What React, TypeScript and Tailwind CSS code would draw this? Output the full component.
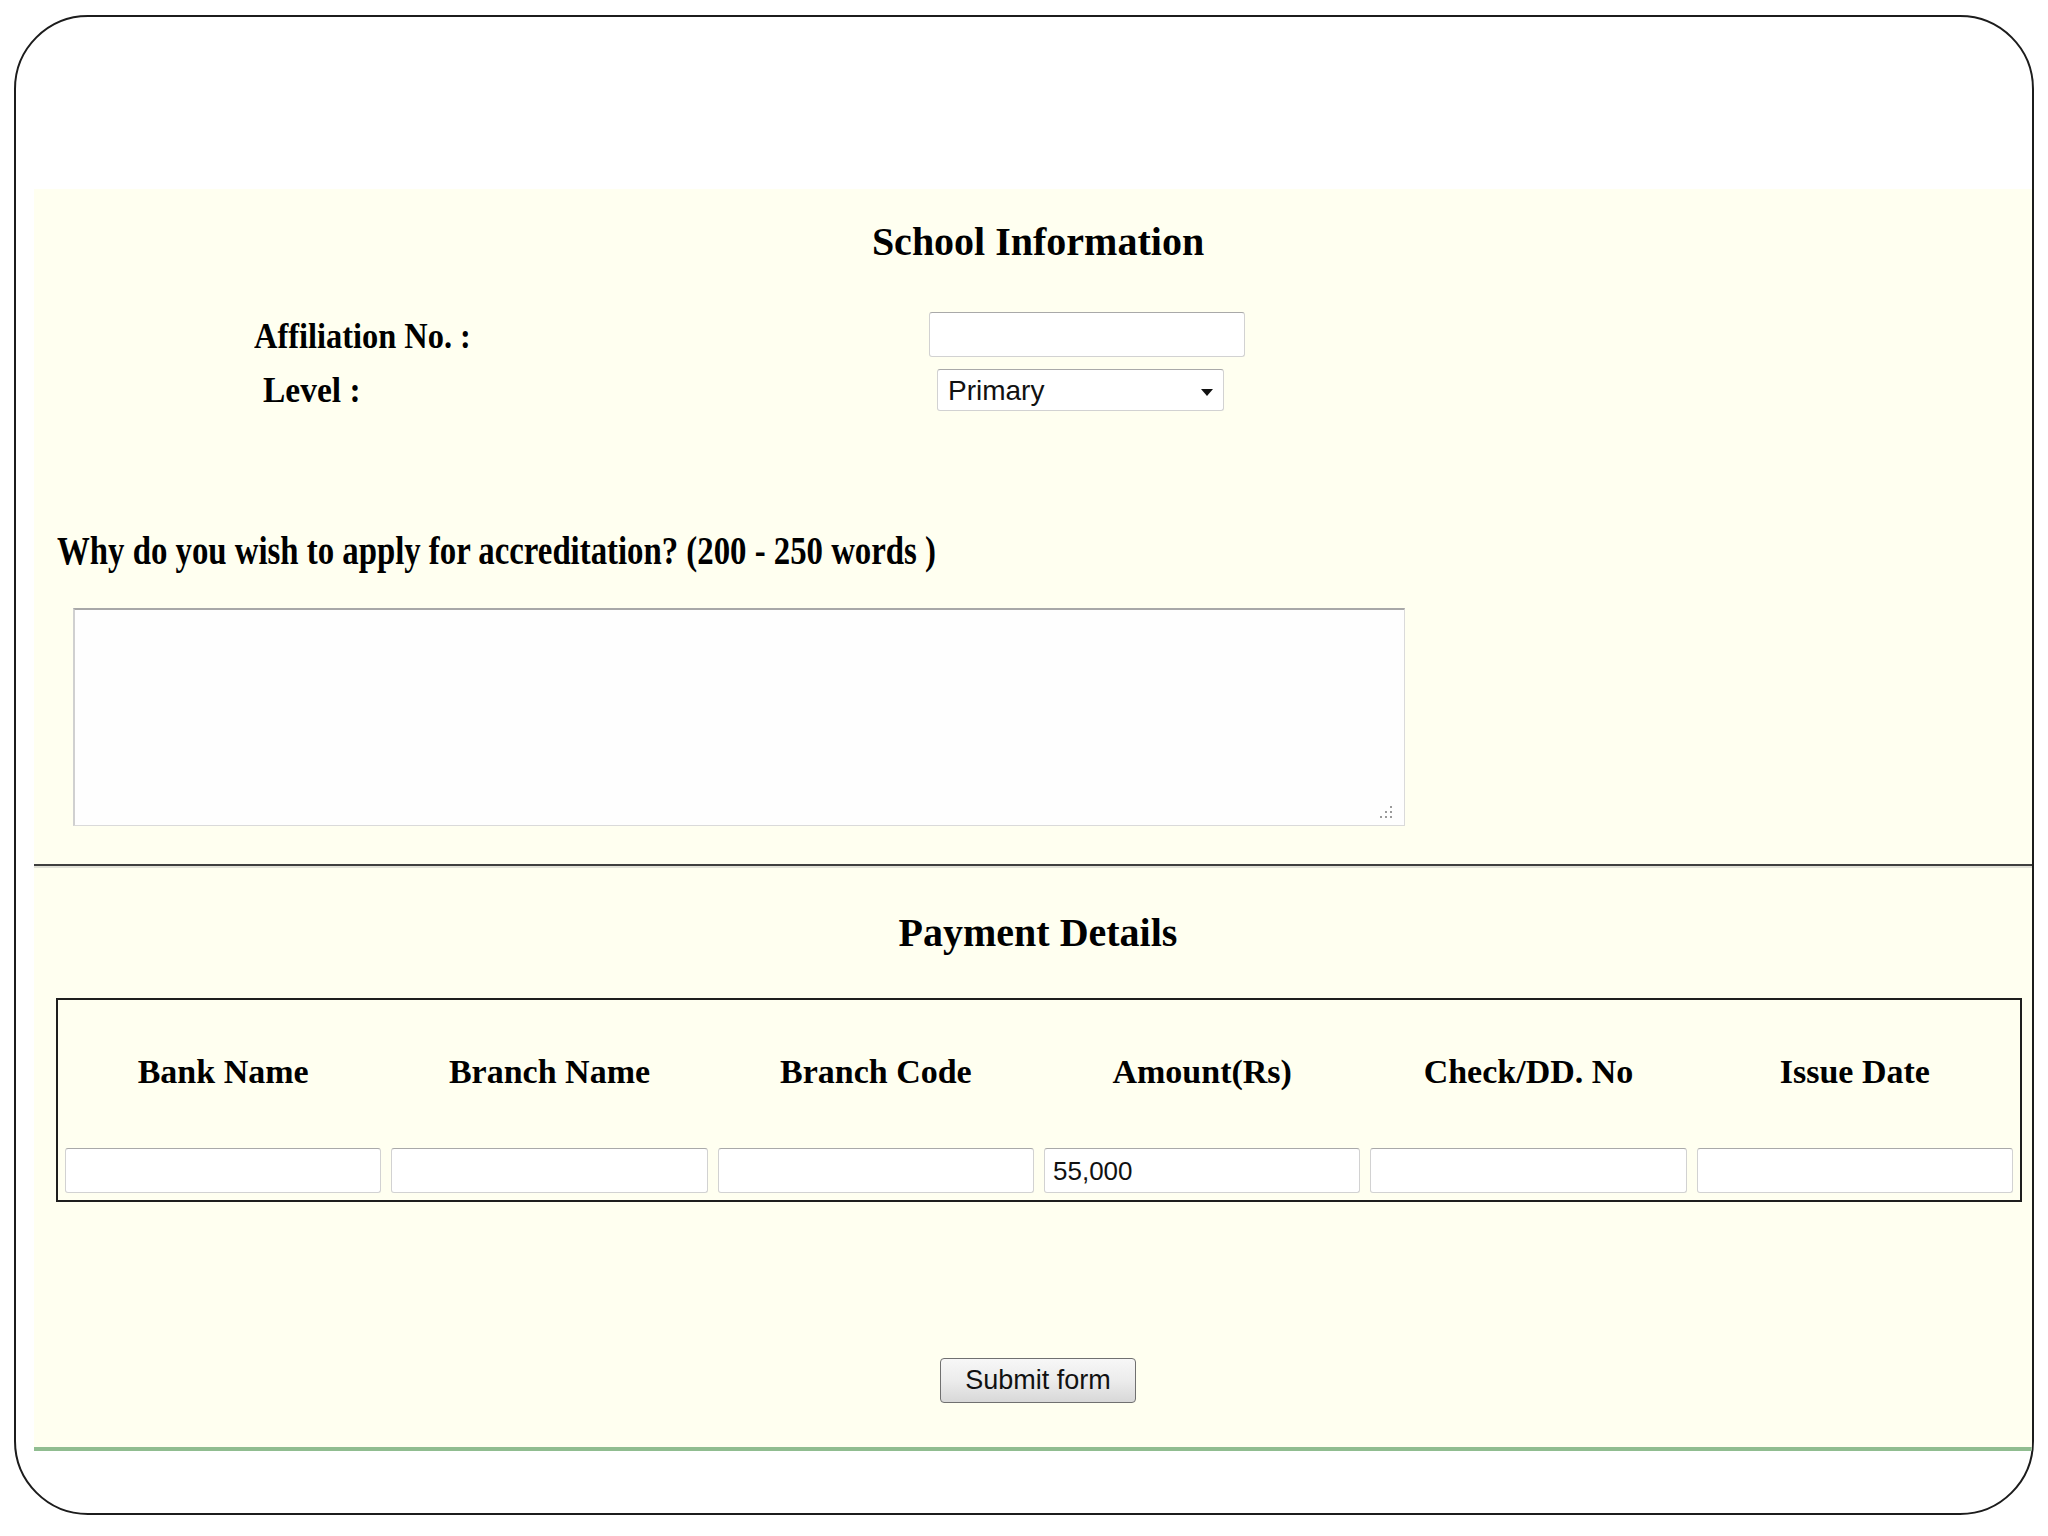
import React from "react";

const columns = [
  { title: "Bank Name", value: "" },
  { title: "Branch Name", value: "" },
  { title: "Branch Code", value: "" },
  { title: "Amount(Rs)", value: "55,000" },
  { title: "Check/DD. No", value: "" },
  { title: "Issue Date", value: "" },
];

const fieldClass =
  "bg-white border border-[#d2d2d2] border-t-[#a9a9a9] rounded-[3px] outline-none font-['Liberation_Sans',Arial,sans-serif] text-[#111]";

export default function App() {
  return (
    <div className="w-[2048px] h-[1536px] bg-white pl-[14px] pt-[15px]">
      {/* slide frame */}
      <div className="w-[2020px] h-[1500px] border-2 border-[#1c1c1c] rounded-[74px] overflow-hidden bg-white pl-[18px] pt-[172px]">
        <div className="w-[1998px] h-[1262px] flex flex-col bg-[#fffff0] border-b-4 border-[#90bd90] font-['Liberation_Serif','Times_New_Roman',serif] text-black">
          {/* School Information */}
          <h2 className="mt-[29px] pl-[10px] text-center text-[40px] leading-[48px] font-bold">
            School Information
          </h2>

          <div className="mt-[46px] flex pl-[220px]">
            <div className="w-[675px] h-[45px] pt-[2px] text-[36px] leading-[45px] font-bold whitespace-nowrap">
              <span className="inline-block scale-x-[0.9] origin-left">Affiliation No. :</span>
            </div>
            <input className={`${fieldClass} w-[316px] h-[45px]`} />
          </div>

          <div className="mt-[12px] flex pl-[220px]">
            <div className="w-[675px] h-[42px] pl-[9px] text-[36px] leading-[42px] font-bold whitespace-nowrap">
              <span className="inline-block scale-x-[0.93] origin-left">Level :</span>
            </div>
            <div className="relative ml-[8px] w-[287px] h-[42px]">
              <select
                defaultValue="Primary"
                className={`${fieldClass} appearance-none w-full h-full pl-[10px] pt-[1px] text-[28px] leading-[40px]`}
              >
                <option>Primary</option>
                <option>Secondary</option>
                <option>Senior Secondary</option>
              </select>
              <svg
                className="absolute right-[11px] top-[20px] pointer-events-none"
                width="12"
                height="7"
                viewBox="0 0 12 7"
              >
                <path d="M0 0H12L6 7Z" fill="#111" />
              </svg>
            </div>
          </div>

          <div className="mt-[116px] pl-[23px] text-[40px] leading-[48px] font-bold whitespace-nowrap">
            <span className="inline-block scale-x-[0.82] origin-left">
              Why do you wish to apply for accreditation? (200 - 250 words )
            </span>
          </div>

          <div className="relative mt-[33px] ml-[39px] w-[1332px] h-[218px]">
            <textarea className="w-full h-full resize-none bg-[#fefefe] border border-[#dadada] border-t-2 border-t-[#a8a8a8] border-l-2 border-l-[#d0d0d0] outline-none" />
            <svg
              className="absolute right-[12px] bottom-[7px]"
              width="14"
              height="14"
              viewBox="0 0 14 14"
            >
              <g fill="#9a9a9a">
                <rect x="11" y="1" width="2" height="2" />
                <rect x="6" y="6" width="2" height="2" />
                <rect x="11" y="6" width="2" height="2" />
                <rect x="1" y="11" width="2" height="2" />
                <rect x="6" y="11" width="2" height="2" />
                <rect x="11" y="11" width="2" height="2" />
              </g>
            </svg>
          </div>

          {/* rule */}
          <div className="mt-[38px] h-[2px] bg-[#3f3f3f]" />
          <div className="h-[2px] bg-[#e2e2d8]" />

          {/* Payment Details */}
          <h2 className="mt-[41px] pl-[10px] text-center text-[40px] leading-[48px] font-bold">
            Payment Details
          </h2>

          <div className="mt-[41px] ml-[22px] w-[1966px] h-[204px] border-2 border-[#1e1e1e] px-[7px] pb-[7px] grid grid-cols-6 gap-x-[10px]">
            {columns.map((c) => (
              <div key={c.title} className="flex flex-col">
                <div className="h-[148px] pt-[52px] text-center text-[34px] leading-[40px] font-bold whitespace-nowrap">
                  {c.title}
                </div>
                <input
                  defaultValue={c.value}
                  className={`${fieldClass} w-full h-[45px] px-[8px] pt-[2px] text-[26px]`}
                />
              </div>
            ))}
          </div>

          <div className="mt-[156px] flex justify-center pl-[10px]">
            <button className="w-[196px] h-[45px] border border-[#707070] rounded-[4px] bg-gradient-to-b from-[#f7f7f7] via-[#ececec] to-[#d8d8d8] font-['Liberation_Sans',Arial,sans-serif] text-[27px] leading-[43px] text-[#111]">
              Submit form
            </button>
          </div>
        </div>
      </div>
    </div>
  );
}
